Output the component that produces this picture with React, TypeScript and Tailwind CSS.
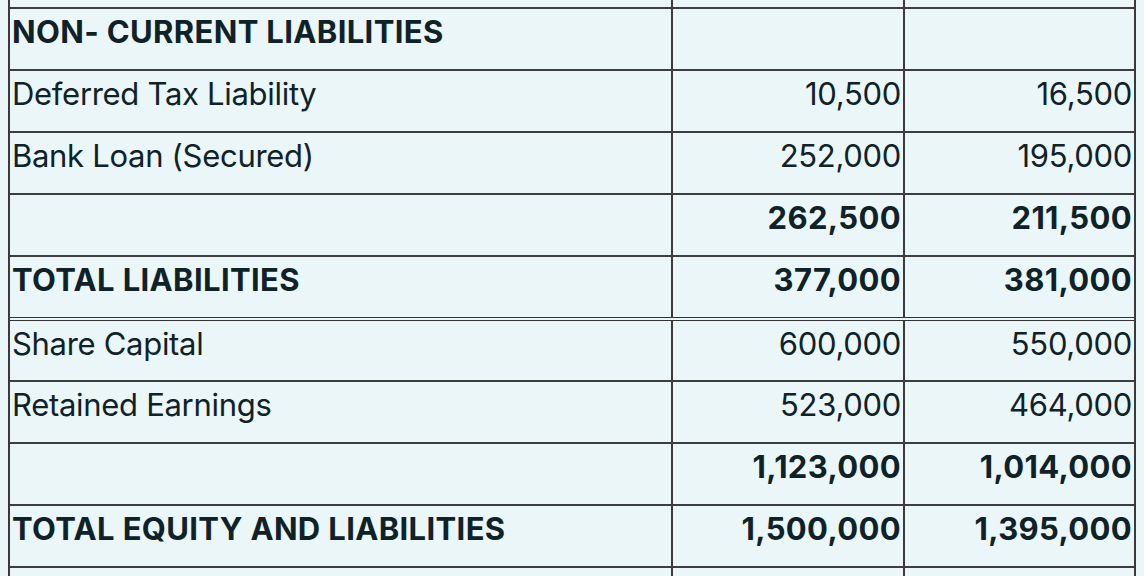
const rows: { label: string; a: string; b: string; bold?: boolean; double?: boolean }[] = [
  { label: '', a: '', b: '' },
  { label: 'NON- CURRENT LIABILITIES', a: '', b: '', bold: true },
  { label: 'Deferred Tax Liability', a: '10,500', b: '16,500' },
  { label: 'Bank Loan (Secured)', a: '252,000', b: '195,000' },
  { label: '', a: '262,500', b: '211,500', bold: true },
  { label: 'TOTAL LIABILITIES', a: '377,000', b: '381,000', bold: true },
  { label: 'Share Capital', a: '600,000', b: '550,000', double: true },
  { label: 'Retained Earnings', a: '523,000', b: '464,000' },
  { label: '', a: '1,123,000', b: '1,014,000', bold: true },
  { label: 'TOTAL EQUITY AND LIABILITIES', a: '1,500,000', b: '1,395,000', bold: true },
  { label: '', a: '', b: '' },
];

function App() {
  return (
    <div className="h-screen overflow-hidden bg-[#eaf6f8] font-['Inter','Liberation_Sans',sans-serif] text-[#0f2228]">
      <div className="-mt-[55px] ml-[8px] w-[1128px] border-x-2 border-[#3a3a3a]">
        {rows.map((r, i) => (
          <div
            key={i}
            className={
              'grid h-[62px] grid-cols-[661px_232px_231px] text-[31px] leading-[38px] ' +
              (r.double ? 'border-t-[4px] border-double border-[#333] h-[63px] ' : 'border-t-2 border-[#3e3e3e] ') +
              (r.bold ? 'font-bold tracking-[0.35px]' : 'font-normal tracking-[-0.3px]')
            }
          >
            <div className="pl-[2px] pt-[4px]">{r.label}</div>
            <div className="border-l-2 border-[#3a3a3a] pr-[2px] pt-[4px] text-right">{r.a}</div>
            <div className="border-l-2 border-[#3a3a3a] pr-[2px] pt-[4px] text-right">{r.b}</div>
          </div>
        ))}
      </div>
    </div>
  );
}

export default App;
